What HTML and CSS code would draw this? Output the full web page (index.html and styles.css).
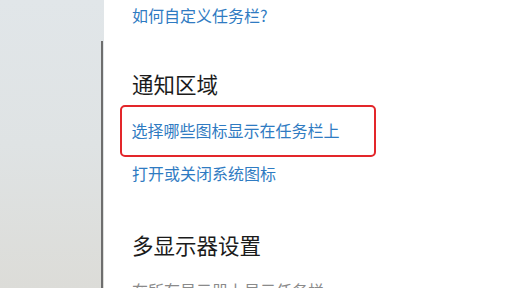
FILE: index.html
```html
<!DOCTYPE html>
<html lang="zh-CN">
<head>
<meta charset="utf-8">
<title>任务栏设置</title>
<link rel="stylesheet" href="styles.css">
</head>
<body>
<div class="page">
  <aside class="sidebar">
    <div class="scrollbar"></div>
  </aside>
  <main class="content">
    <a class="link first">如何自定义任务栏?</a>
    <h2 class="heading h-notify">通知区域</h2>
    <div class="highlight">
      <a class="link">选择哪些图标显示在任务栏上</a>
    </div>
    <a class="link after-box">打开或关闭系统图标</a>
    <h2 class="heading h-multi">多显示器设置</h2>
    <div class="muted">在所有显示器上显示任务栏</div>
  </main>
</div>
</body>
</html>
```
FILE: styles.css
```css
html, body {
  margin: 0;
  padding: 0;
  background: #ffffff;
}
body {
  font-family: "Noto Sans CJK SC", "Noto Sans", sans-serif;
}
.page {
  display: flex;
  height: 288px;
  overflow: hidden;
  background: #ffffff;
}
.sidebar {
  width: 104px;
  flex: none;
  display: flex;
  justify-content: flex-end;
  background: linear-gradient(180deg, #e1e6e9 0%, #dfe3e4 50%, #dcdcd8 100%);
}
.scrollbar {
  width: 2px;
  margin-top: 41px;
  margin-right: 1px;
  background: #6e6e6e;
}
.content {
  flex: 1;
  padding-left: 28px;
  display: flex;
  flex-direction: column;
  align-items: flex-start;
}
.link {
  display: block;
  color: #2f7bc2;
  font-size: 16px;
  line-height: 16px;
  text-decoration: none;
  cursor: pointer;
}
.first {
  margin-top: 7px;
}
.heading {
  margin: 0;
  font-weight: normal;
  color: #1b1b1b;
  font-size: 21.5px;
  line-height: 22px;
}
.h-notify {
  margin-top: 50px;
}
.highlight {
  margin-top: 10px;
  margin-left: -12px;
  width: 242px;
  padding: 15px 0 17px 9.5px;
  border: 2.5px solid #e3262a;
  border-radius: 5px;
}
.after-box {
  margin-top: 8px;
}
.h-multi {
  margin-top: 53px;
}
.muted {
  margin-top: 26px;
  color: #8a8a8a;
  font-size: 16px;
  line-height: 16px;
}
```
